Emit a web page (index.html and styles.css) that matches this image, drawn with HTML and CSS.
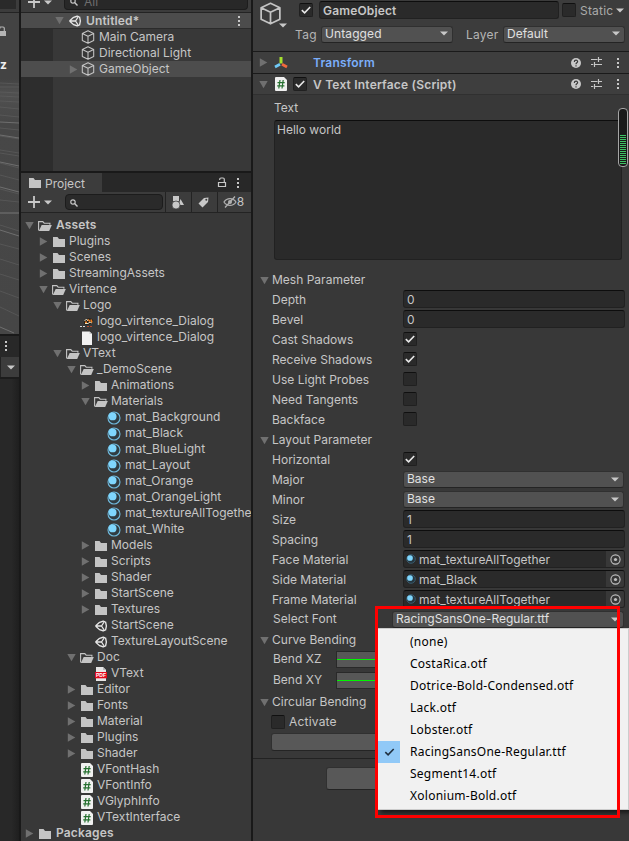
FILE: index.html
```html
<!DOCTYPE html>
<html lang="en">
<head>
<meta charset="utf-8">
<title>Editor</title>
<link rel="stylesheet" href="styles.css">
</head>
<body>
<svg class="defs" aria-hidden="true">
  <symbol id="folder" viewBox="0 0 14 14"><path d="M1 2h4.500l1.500 2H13v8H1z" fill="#c4c4c4"/></symbol>
  <symbol id="open" viewBox="0 0 14 14"><path d="M.6 11.500V2.600h4.200l1.400 1.600h5.700v1.600" fill="none" stroke="#c4c4c4" stroke-width="1.100"/><path d="M3.700 6H13.800l-2.600 6H.8z" fill="#c4c4c4"/></symbol>
  <symbol id="cube" viewBox="0 0 14 14"><path d="M7 .8l5.700 2.700v7L7 13.300 1.300 10.500v-7zM1.300 3.500L7 6.300l5.700-2.800M7 6.300v7" fill="none" stroke="#c4c4c4" stroke-width="1.050" stroke-linejoin="round"/></symbol>
  <symbol id="scene" viewBox="0 0 14 14"><path d="M5.600 3.300L9.800 2M1.500 7l4.100-3.700M1.500 7l4.100 3.700L9.800 12M11.500 2.600l.9 4.400-.9 4.400M7.500 7H2M7.500 7l3.300-5M7.500 7l3.300 5" fill="none" stroke="#e6e6e6" stroke-width="1.350"/></symbol>
  <symbol id="mat" viewBox="0 0 14 14"><circle cx="7" cy="7" r="6" fill="#303c42" stroke="#6fb9dc" stroke-width="1.100"/><circle cx="5.600" cy="5.400" r="3.900" fill="#7fd6fd"/></symbol>
  <symbol id="matsmall" viewBox="0 0 14 14"><circle cx="7" cy="7" r="6" fill="#25343c" stroke="#3d6478" stroke-width="1.200"/><circle cx="5.600" cy="5.600" r="4" fill="#7fd6fd"/></symbol>
  <symbol id="cs" viewBox="0 0 14 14"><path d="M2 0h8l3 3v10a1 1 0 0 1-1 1H2a1 1 0 0 1-1-1V1a1 1 0 0 1 1-1z" fill="#f0f0f0"/><path d="M6 3L4.800 11.500M9.200 3L8 11.500M3.500 5.700h7.200M3.200 8.800h7.200" stroke="#267030" stroke-width="1.200"/></symbol>
  <symbol id="file" viewBox="0 0 14 14"><path d="M2 .5h7.500l2.500 2.500v11H2z" fill="#f2f2f2"/><path d="M9.500.5V3H12z" fill="#ccc"/></symbol>
  <symbol id="bug" viewBox="0 0 14 14"><path d="M4 7c1-4 7-5 9.500-1.500L12 8.500 7 10 4 9z" fill="#25211a"/><path d="M4.500 6l2-2 1.500 2M5 8.500h3l2-1.500 2 1" stroke="#e9e3c8" fill="none"/><path d="M8 4.500l2 2M11 4.500l1 3M5 7.200h2" stroke="#ec7c20" stroke-width="1.500"/><path d="M0 11.500h6" stroke="#ddd" stroke-dasharray="2 1"/><path d="M7 11.500h6" stroke="#b5482c" stroke-dasharray="2 1"/></symbol>
  <symbol id="pdf" viewBox="0 0 14 14"><path d="M2 0h7l3 3v11H2z" fill="#e6e6e6"/><path d="M9 0v3h3z" fill="#bbb"/><rect x="1" y="5" width="12" height="6.300" fill="#e1061b"/><text x="7" y="10" text-anchor="middle" class="pdf-text">PDF</text></symbol>
  <symbol id="down" viewBox="0 0 9 8"><path d="M.3.5h8.400L4.500 7.700z" fill="#707070"/></symbol>
  <symbol id="right" viewBox="0 0 8 9"><path d="M.3.200L7.800 4.500.3 8.800z" fill="#707070"/></symbol>
  <symbol id="caret" viewBox="0 0 8 5"><path d="M0 .5h8L4 4.500z" fill="#c8c8c8"/></symbol>
  <symbol id="dots" viewBox="0 0 4 12"><path d="M1 1h2v2H1zM1 5h2v2H1zM1 9h2v2H1z" fill="#c8c8c8"/></symbol>
  <symbol id="plus" viewBox="0 0 12 12"><path d="M6 0v12M0 6h12" stroke="#c8c8c8" stroke-width="1.800"/></symbol>
  <symbol id="search" viewBox="0 0 8 8"><circle cx="3" cy="3" r="2.200" fill="none" stroke="#c8c8c8" stroke-width="1.200"/><path d="M4.600 4.600L7.500 7.500" stroke="#c8c8c8" stroke-width="1.400"/></symbol>
  <symbol id="lock" viewBox="0 0 10 11"><path d="M1.500 5.500h7v4h-7z" fill="none" stroke="#c8c8c8" stroke-width="1.200"/><path d="M2.700 3V2.300Q2.700 1 4 1h2Q7.300 1 7.300 2.300V5.500" fill="none" stroke="#c8c8c8" stroke-width="1.200"/></symbol>
  <symbol id="lockfull" viewBox="0 0 10 11"><path d="M1 5h8v5H1z" fill="#b4b4b4"/><path d="M2.700 3V2.300Q2.700 1 4 1h2Q7.300 1 7.300 2.300V5.500" fill="none" stroke="#b4b4b4" stroke-width="1.200"/></symbol>
  <symbol id="help" viewBox="0 0 10 10"><circle cx="5" cy="5" r="5" fill="#c8c8c8"/><path d="M3.300 3.900C3.400 1.500 6.800 1.700 6.600 3.800 6.500 4.900 5 4.800 5 6.200M5 7.200v1.200" fill="none" stroke="#383838" stroke-width="1.200"/></symbol>
  <symbol id="preset" viewBox="0 0 11 11"><path d="M0 3.500h6.500M8 3.500h3M7.500 1v5M0 8.500h2.300M4 8.500h7M3.500 6v5" fill="none" stroke="#c8c8c8" stroke-width="1.150"/></symbol>
  <symbol id="check" viewBox="0 0 10 8"><path d="M.8 4.200l2.800 2.600L9.200 1" fill="none" stroke="currentColor" stroke-width="1.600"/></symbol>
  <symbol id="target" viewBox="0 0 11 11"><circle cx="5.500" cy="5.500" r="4.600" fill="none" stroke="#c0c0c0" stroke-width="1.100"/><circle cx="5.500" cy="5.500" r="1.600" fill="#c0c0c0"/></symbol>
</svg>

<main class="app">
  <aside class="scene-strip">
    <div class="strip-field"></div>
    <div class="strip-view">
      <svg class="strip-lock"><use href="#lockfull"/></svg>
      <b class="axis">z</b>
      <svg class="grid-lines" viewBox="0 0 19 253" preserveAspectRatio="none">
        <g fill="none" stroke="#626262" stroke-width=".6"><path d="M0 2l19 1M0 6h19M0 11l19 1M0 15l19 1M0 20l19 1M0 26l19 2M0 34l19 2M0 47l19 2M0 55l19 3M0 69l19 3M0 72l19 3M0 82l19 5M0 94l19 5M0 108l19 5M0 119l19 2M0 132l19 0M0 144l19 6M0 163l19 5M0 178l19 6M0 193l19 6M0 210l19 7M0 226l19 9"/></g>
        <g fill="none" stroke="#808080" stroke-width=".7"><path d="M0 41l19 1M0 54l19 3M0 81l19 4M0 106l19 5M0 132h19M0 149l19 6M0 246l14 6"/></g>
      </svg>
    </div>
    <div class="strip-tab"><svg class="dots"><use href="#dots"/></svg></div>
    <div class="strip-tool"><svg class="caret"><use href="#caret"/></svg></div>
    <div class="strip-dark"></div>
  </aside>

  <section class="middle">
    <div class="hier-bar">
      <svg class="plus"><use href="#plus"/></svg><svg class="caret"><use href="#caret"/></svg>
      <div class="all"><svg class="mag"><use href="#search"/></svg><span>All</span></div>
    </div>
    <div class="hierarchy">
      <div class="hrow scene-row"><svg class="ar"><use href="#down"/></svg><svg class="ic"><use href="#scene"/></svg><b>Untitled*</b><svg class="dots"><use href="#dots"/></svg></div>
      <div class="hrow item"><svg class="ic"><use href="#cube"/></svg><span>Main Camera</span></div>
      <div class="hrow item"><svg class="ic"><use href="#cube"/></svg><span>Directional Light</span></div>
      <div class="hrow item parent selected"><svg class="ar"><use href="#right"/></svg><svg class="ic"><use href="#cube"/></svg><span>GameObject</span></div>
    </div>
    <div class="tabs"><div class="tab"><svg class="ic"><use href="#folder"/></svg><span>Project</span></div><svg class="tab-lock"><use href="#lock"/></svg><svg class="dots"><use href="#dots"/></svg></div>
    <div class="proj-bar">
      <svg class="plus"><use href="#plus"/></svg><svg class="caret"><use href="#caret"/></svg>
      <div class="search"><svg class="mag"><use href="#search"/></svg></div>
      <div class="tool"><svg width="12" height="13" viewBox="0 0 12 13"><path d="M1 0h6v5H1zM8.500 3l3.500 6H6.500z" fill="#c8c8c8"/><circle cx="4" cy="9" r="4" fill="#c8c8c8" stroke="#3c3c3c" stroke-width=".7"/></svg></div>
      <div class="tool"><svg width="11" height="11" viewBox="0 0 11 11"><path d="M6 1l4.500-.5L10 5 4.500 10.500.5 6.500z" fill="#c8c8c8"/><circle cx="8.300" cy="2.700" r="1" fill="#3c3c3c"/></svg></div>
      <div class="tool eye"><svg width="14" height="12" viewBox="0 0 14 12"><path d="M1 6c3-4.600 9-4.600 12 0-3 4.600-9 4.600-12 0zM2 11.500L12 .5" fill="none" stroke="#b0b0b0" stroke-width="1.300"/><circle cx="7" cy="6" r="2" fill="#b0b0b0"/></svg><span>8</span></div>
    </div>
    <div class="tree">
      <div class="row l0"><svg class="ar"><use href="#down"/></svg><svg class="ic"><use href="#open"/></svg><b>Assets</b></div>
      <div class="row l1"><svg class="ar"><use href="#right"/></svg><svg class="ic"><use href="#folder"/></svg><span>Plugins</span></div>
      <div class="row l1"><svg class="ar"><use href="#right"/></svg><svg class="ic"><use href="#folder"/></svg><span>Scenes</span></div>
      <div class="row l1"><svg class="ar"><use href="#right"/></svg><svg class="ic"><use href="#folder"/></svg><span>StreamingAssets</span></div>
      <div class="row l1"><svg class="ar"><use href="#down"/></svg><svg class="ic"><use href="#open"/></svg><span>Virtence</span></div>
      <div class="row l2"><svg class="ar"><use href="#down"/></svg><svg class="ic"><use href="#open"/></svg><span>Logo</span></div>
      <div class="row l3"><i class="ar"></i><svg class="ic"><use href="#bug"/></svg><span>logo_virtence_Dialog</span></div>
      <div class="row l3"><i class="ar"></i><svg class="ic"><use href="#file"/></svg><span>logo_virtence_Dialog</span></div>
      <div class="row l2"><svg class="ar"><use href="#down"/></svg><svg class="ic"><use href="#open"/></svg><span>VText</span></div>
      <div class="row l3"><svg class="ar"><use href="#down"/></svg><svg class="ic"><use href="#open"/></svg><span>_DemoScene</span></div>
      <div class="row l4"><svg class="ar"><use href="#right"/></svg><svg class="ic"><use href="#folder"/></svg><span>Animations</span></div>
      <div class="row l4"><svg class="ar"><use href="#down"/></svg><svg class="ic"><use href="#open"/></svg><span>Materials</span></div>
      <div class="row l5"><i class="ar"></i><svg class="ic"><use href="#mat"/></svg><span>mat_Background</span></div>
      <div class="row l5"><i class="ar"></i><svg class="ic"><use href="#mat"/></svg><span>mat_Black</span></div>
      <div class="row l5"><i class="ar"></i><svg class="ic"><use href="#mat"/></svg><span>mat_BlueLight</span></div>
      <div class="row l5"><i class="ar"></i><svg class="ic"><use href="#mat"/></svg><span>mat_Layout</span></div>
      <div class="row l5"><i class="ar"></i><svg class="ic"><use href="#mat"/></svg><span>mat_Orange</span></div>
      <div class="row l5"><i class="ar"></i><svg class="ic"><use href="#mat"/></svg><span>mat_OrangeLight</span></div>
      <div class="row l5"><i class="ar"></i><svg class="ic"><use href="#mat"/></svg><span>mat_textureAllTogethe</span></div>
      <div class="row l5"><i class="ar"></i><svg class="ic"><use href="#mat"/></svg><span>mat_White</span></div>
      <div class="row l4"><svg class="ar"><use href="#right"/></svg><svg class="ic"><use href="#folder"/></svg><span>Models</span></div>
      <div class="row l4"><svg class="ar"><use href="#right"/></svg><svg class="ic"><use href="#folder"/></svg><span>Scripts</span></div>
      <div class="row l4"><svg class="ar"><use href="#right"/></svg><svg class="ic"><use href="#folder"/></svg><span>Shader</span></div>
      <div class="row l4"><svg class="ar"><use href="#right"/></svg><svg class="ic"><use href="#folder"/></svg><span>StartScene</span></div>
      <div class="row l4"><svg class="ar"><use href="#right"/></svg><svg class="ic"><use href="#folder"/></svg><span>Textures</span></div>
      <div class="row l4"><i class="ar"></i><svg class="ic"><use href="#scene"/></svg><span>StartScene</span></div>
      <div class="row l4"><i class="ar"></i><svg class="ic"><use href="#scene"/></svg><span>TextureLayoutScene</span></div>
      <div class="row l3"><svg class="ar"><use href="#down"/></svg><svg class="ic"><use href="#open"/></svg><span>Doc</span></div>
      <div class="row l4"><i class="ar"></i><svg class="ic"><use href="#pdf"/></svg><span>VText</span></div>
      <div class="row l3"><svg class="ar"><use href="#right"/></svg><svg class="ic"><use href="#folder"/></svg><span>Editor</span></div>
      <div class="row l3"><svg class="ar"><use href="#right"/></svg><svg class="ic"><use href="#folder"/></svg><span>Fonts</span></div>
      <div class="row l3"><svg class="ar"><use href="#right"/></svg><svg class="ic"><use href="#folder"/></svg><span>Material</span></div>
      <div class="row l3"><svg class="ar"><use href="#right"/></svg><svg class="ic"><use href="#folder"/></svg><span>Plugins</span></div>
      <div class="row l3"><svg class="ar"><use href="#right"/></svg><svg class="ic"><use href="#folder"/></svg><span>Shader</span></div>
      <div class="row l3"><i class="ar"></i><svg class="ic"><use href="#cs"/></svg><span>VFontHash</span></div>
      <div class="row l3"><i class="ar"></i><svg class="ic"><use href="#cs"/></svg><span>VFontInfo</span></div>
      <div class="row l3"><i class="ar"></i><svg class="ic"><use href="#cs"/></svg><span>VGlyphInfo</span></div>
      <div class="row l3"><i class="ar"></i><svg class="ic"><use href="#cs"/></svg><span>VTextInterface</span></div>
      <div class="row l0"><svg class="ar"><use href="#right"/></svg><svg class="ic"><use href="#folder"/></svg><b>Packages</b></div>
    </div>
  </section>

  <section class="inspector">
    <header class="object-head">
      <div class="big-icon"><svg class="big-cube"><use href="#cube"/></svg><svg class="caret"><use href="#caret"/></svg></div>
      <div class="head-lines">
        <div class="name-line"><span class="box"><svg><use href="#check"/></svg></span><b class="field name">GameObject</b><span class="box"></span><span class="static">Static</span><svg class="caret"><use href="#caret"/></svg></div>
        <div class="tag-line"><span class="tag">Tag</span><span class="drop untagged">Untagged<svg class="caret"><use href="#caret"/></svg></span><span class="layer">Layer</span><span class="drop default">Default<svg class="caret"><use href="#caret"/></svg></span></div>
      </div>
    </header>
    <div class="component">
      <svg class="ar"><use href="#right"/></svg>
      <svg class="comp-icon" viewBox="0 0 14 14"><path d="M7 1v6.500" stroke="#a6e22e" stroke-width="3"/><path d="M6 8.200L1 11" stroke="#6fc9f5" stroke-width="2.700"/><path d="M8 8.200l5 2.800" stroke="#f2693d" stroke-width="2.700"/></svg>
      <i class="gap"></i><b class="transform">Transform</b>
      <svg class="help"><use href="#help"/></svg><svg class="preset"><use href="#preset"/></svg><svg class="dots"><use href="#dots"/></svg>
    </div>
    <div class="component second">
      <svg class="ar"><use href="#down"/></svg>
      <svg class="comp-icon"><use href="#cs"/></svg>
      <span class="box"><svg><use href="#check"/></svg></span><b>V Text Interface (Script)</b>
      <svg class="help"><use href="#help"/></svg><svg class="preset"><use href="#preset"/></svg><svg class="dots"><use href="#dots"/></svg>
    </div>
    <div class="body">
      <div class="text-label">Text</div>
      <div class="textarea">Hello world</div>
      <div class="prop fold"><svg class="ar"><use href="#down"/></svg><span>Mesh Parameter</span></div>
      <div class="prop"><label>Depth</label><span class="field">0</span></div>
      <div class="prop"><label>Bevel</label><span class="field">0</span></div>
      <div class="prop"><label>Cast Shadows</label><span class="box"><svg><use href="#check"/></svg></span></div>
      <div class="prop"><label>Receive Shadows</label><span class="box"><svg><use href="#check"/></svg></span></div>
      <div class="prop"><label>Use Light Probes</label><span class="box"></span></div>
      <div class="prop"><label>Need Tangents</label><span class="box"></span></div>
      <div class="prop"><label>Backface</label><span class="box"></span></div>
      <div class="prop fold"><svg class="ar"><use href="#down"/></svg><span>Layout Parameter</span></div>
      <div class="prop"><label>Horizontal</label><span class="box"><svg><use href="#check"/></svg></span></div>
      <div class="prop"><label>Major</label><span class="drop">Base<svg class="caret"><use href="#caret"/></svg></span></div>
      <div class="prop"><label>Minor</label><span class="drop">Base<svg class="caret"><use href="#caret"/></svg></span></div>
      <div class="prop"><label>Size</label><span class="field">1</span></div>
      <div class="prop"><label>Spacing</label><span class="field">1</span></div>
      <div class="prop"><label>Face Material</label><span class="field object"><svg class="mini"><use href="#matsmall"/></svg>mat_textureAllTogether<i class="pick"><svg><use href="#target"/></svg></i></span></div>
      <div class="prop"><label>Side Material</label><span class="field object"><svg class="mini"><use href="#matsmall"/></svg>mat_Black<i class="pick"><svg><use href="#target"/></svg></i></span></div>
      <div class="prop"><label>Frame Material</label><span class="field object"><svg class="mini"><use href="#matsmall"/></svg>mat_textureAllTogether<i class="pick"><svg><use href="#target"/></svg></i></span></div>
      <div class="prop select-font"><label>Select Font</label><span class="drop">RacingSansOne-Regular.ttf<svg class="caret"><use href="#caret"/></svg></span></div>
      <div class="prop fold"><svg class="ar"><use href="#down"/></svg><span>Curve Bending</span></div>
      <div class="prop bend"><label>Bend XZ</label><span class="curve"></span></div>
      <div class="prop bend"><label>Bend XY</label><span class="curve"></span></div>
      <div class="prop fold"><svg class="ar"><use href="#down"/></svg><span>Circular Bending</span></div>
      <div class="activate"><span class="box"></span><span>Activate</span></div>
      <div class="button wide"></div>
    </div>
    <div class="footer"><div class="button add"></div></div>
  </section>
</main>

<div class="meter"><i></i></div>
<ul class="menu">
  <li>(none)</li>
  <li>CostaRica.otf</li>
  <li>Dotrice-Bold-Condensed.otf</li>
  <li>Lack.otf</li>
  <li>Lobster.otf</li>
  <li class="chosen"><i><svg><use href="#check"/></svg></i>RacingSansOne-Regular.ttf</li>
  <li>Segment14.otf</li>
  <li>Xolonium-Bold.otf</li>
</ul>
<div class="highlight"></div>
</body>
</html>
```
FILE: styles.css
```css
* { box-sizing: border-box; }
body { margin: 0; width: 629px; height: 841px; overflow: hidden; position: relative; background: #191919; color: #c6c6c6; font: 12px/16px Inter, "Liberation Sans", sans-serif; letter-spacing: .01px; }
svg { display: block; flex: none; }
i { font-style: normal; }
b { font-weight: 600; letter-spacing: .15px; }
.defs { position: absolute; width: 0; height: 0; }
.pdf-text { font: 700 5px "Liberation Sans", sans-serif; fill: #fff; letter-spacing: 0; }
.app { display: grid; grid-template-columns: 19px 230px 376px; column-gap: 2px; height: 841px; }
.caret { width: 8px; height: 5px; }
.dots { width: 4px; height: 12px; }
.plus { width: 12px; height: 12px; }
.mag { width: 8px; height: 8px; }
.ic { width: 14px; height: 14px; }
.ar { width: 9px; height: 9px; flex: none; }

.scene-strip { display: flex; flex-direction: column; background: #3c3c3c; overflow: hidden; }
.strip-field { height: 13px; border-bottom: 1px solid #232323; background: linear-gradient(#2a2a2a, #2a2a2a) 0 0 / 16px 9px no-repeat #3c3c3c; }
.strip-view { height: 321px; padding-top: 1px; background: linear-gradient(#434343 0 66px, #505050 80px, #474747 110px, #464646); }
.strip-lock { width: 10px; height: 11px; margin: 12px 0 0 -3px; }
.axis { display: block; margin: 20px 0 0; font-size: 12px; line-height: 16px; color: #eee; font-weight: 700; }
.grid-lines { width: 19px; height: 253px; margin-top: 8px; }
.strip-tab { height: 21px; margin-top: 2px; background: #282828; padding: 4px 0 0 4px; box-shadow: 0 -2px #191919; }
.strip-tool { height: 20px; background: #3c3c3c; padding: 8px 0 0 6px; border-left: 1px solid #222; }
.strip-dark { flex: 1; border-top: 2px solid #1c1c1c; background: linear-gradient(90deg, #282828 60%, #1f1f1f); }

.middle { display: flex; flex-direction: column; min-width: 0; background: #383838; overflow: hidden; }
.hier-bar { display: flex; height: 13px; background: #3c3c3c; border-bottom: 1px solid #232323; padding-left: 7px; overflow: hidden; }
.hier-bar .plus { margin-top: -4px; }
.hier-bar .caret { margin: 0 0 0 4px; }
.all { display: flex; width: 184px; height: 10px; margin-left: 12px; padding-left: 5px; background: #282828; border: 1px solid #1d1d1d; border-top: 0; border-radius: 0 0 4px 4px; color: #6e6e6e; }
.all .mag { margin-top: -2px; }
.all span { margin: -6px 0 0 6px; height: 14px; }
.hierarchy { height: 158px; background: linear-gradient(90deg, #2d2d2d 32px, #383838 32px); }
.hrow { display: flex; align-items: center; height: 16px; }
.hrow span { margin-left: 4px; }
.scene-row { background: #4c4c4c; border-bottom: 1px solid #2b2b2b; padding-left: 34px; }
.scene-row .ic { margin-left: 4px; }
.scene-row b { margin-left: 4px; flex: 1; }
.scene-row .dots { margin-right: 10px; }
.item { padding-left: 60px; }
.parent { padding-left: 48px; }
.parent .ic { margin-left: 3px; }
.selected { background: #4d4d4d; }
.tabs { display: flex; height: 21px; border-top: 2px solid #191919; background: #282828; align-items: center; }
.tab { display: flex; align-items: center; width: 81px; height: 19px; padding-left: 7px; background: #3c3c3c; }
.tab .ic { margin-top: 1px; }
.tab span { margin: 3px 0 0 3px; }
.tab-lock { width: 10px; height: 11px; margin-left: 115px; }
.tabs .dots { margin-left: 9px; }
.proj-bar { display: flex; align-items: center; height: 21px; background: #3c3c3c; border-bottom: 1px solid #232323; padding-left: 7px; }
.proj-bar .caret { margin-left: 4px; }
.search { width: 98px; height: 16px; margin: 0 2px 0 13px; background: #2a2a2a; border: 1px solid #1c1c1c; border-radius: 4px; padding: 4px 4px; }
.tool { display: flex; align-items: center; justify-content: center; width: 26px; height: 20px; border-left: 1px solid #232323; padding-right: 2px; }
.tool.eye { width: 34px; }
.tree { padding-top: 4px; }
.row { display: flex; align-items: center; height: 16px; white-space: nowrap; }
.row .ic { margin: 1px 3px 0 4px; }
.l0 { padding-left: 4px; }
.l0 b { padding-left: 1px; }
.l1 { padding-left: 18px; }
.l2 { padding-left: 32px; }
.l3 { padding-left: 46px; }
.l4 { padding-left: 60px; }
.l5 { padding-left: 73px; }
.l5 span { padding-left: 1px; }

.inspector { background: #383838; min-width: 0; overflow: hidden; }
.box { display: flex; align-items: center; justify-content: center; flex: none; width: 14px; height: 14px; background: #2a2a2a; border: 1px solid #202020; border-top-color: #101010; border-radius: 2px; color: #e8e8e8; }
.box svg { width: 10px; height: 8px; }
.field { display: flex; align-items: center; height: 18px; background: #2a2a2a; border: 1px solid #212121; border-top-color: #0d0d0d; border-radius: 3px; padding-left: 3px; }
.drop { display: flex; align-items: center; justify-content: space-between; height: 17px; background: #515151; border: 1px solid #303030; border-bottom-color: #242424; border-radius: 3px; padding: 0 4px 1px 3px; color: #e0e0e0; }
.object-head { display: flex; height: 52px; background: #3c3c3c; border-bottom: 1px solid #1a1a1a; }
.big-icon { width: 42px; flex: none; padding: 2px 0 0 6px; }
.big-cube { width: 23px; height: 23px; }
.big-icon .caret { margin: -2px 0 0 20px; }
.name-line { display: flex; align-items: center; height: 18px; margin: 1px 0 0 4px; }
.name { width: 240px; margin: 0 3px 0 6px; padding-top: 1px; }
.static { width: 33px; margin: 1px 3px 0 4px; color: #aaa; letter-spacing: .2px; }
.tag-line { display: flex; align-items: center; margin-top: 6px; }
.tag { width: 26px; letter-spacing: .3px; margin-top: 2px; color: #b4b4b4; }
.untagged { width: 132px; letter-spacing: .1px; }
.layer { width: 37px; margin: 2px 0 0 13px; letter-spacing: .2px; color: #b4b4b4; }
.default { width: 122px; }
.component { display: flex; align-items: center; height: 22px; background: #3e3e3e; border-bottom: 1px solid #1a1a1a; padding-left: 6px; }
.component.second { height: 21px; border-bottom-color: #303030; }
.comp-icon { width: 14px; height: 14px; margin: 0 5px 0 6px; }
.gap { width: 14px; }
.component b { flex: 1; margin-left: 6px; letter-spacing: .2px; }
.component.second b { padding-top: 1px; }
.component .transform { color: #7baefa; }
.help { width: 10px; height: 10px; }
.preset { width: 11px; height: 11px; margin: -2px 14px 0 10px; }
.component .dots { margin-right: 9px; }
.body { height: 664px; border-bottom: 1px solid #222; }
.text-label { height: 25px; padding: 5px 0 0 21px; }
.textarea { height: 140px; width: 348px; margin: 0 0 10px 21px; padding: 1px 2px; background: #2a2a2a; border: 1px solid #212121; border-top-color: #0d0d0d; border-radius: 3px; }
.prop { display: flex; height: 20px; padding-left: 19px; line-height: 20px; white-space: nowrap; }
.prop label { width: 131px; flex: none; }
.prop .field { width: 222px; line-height: 16px; padding-top: 1px; }
.prop .drop { width: 221px; margin-top: 1px; }
.prop .box { margin-top: 2px; }
.prop.fold { padding-left: 7px; }
.fold .ar { margin: 6px 0 0; }
.fold span { margin-left: 3px; }
.prop .object { overflow: hidden; }
.mini { width: 10px; height: 10px; margin: -1px 3px 0 -1px; }
.pick { display: flex; align-items: center; justify-content: center; margin: -1px 0 0 auto; width: 18px; height: 16px; background: #383838; }
.pick svg { width: 11px; height: 11px; }
.prop.select-font { padding-left: 20px; line-height: 18px; }
.select-font label { width: 119px; }
.select-font .drop { width: 232px; }
.prop.bend { height: 21px; padding-left: 20px; line-height: 18px; }
.bend label { width: 63px; }
.curve { width: 288px; height: 17px; margin-top: 1px; background: linear-gradient(#00f500, #00f500) 0 7px / 100% 1px no-repeat #575757; border: 1px solid #292929; }
.activate { display: flex; align-items: center; gap: 4px; height: 20px; padding-left: 18px; letter-spacing: .2px; }
.button { background: #585858; border: 1px solid #303030; border-bottom-color: #242424; border-radius: 3px; }
.wide { height: 18px; margin: 1px 4px 0 18px; }
.add { width: 230px; height: 23px; margin: 8px 0 0 73px; }

.meter { position: absolute; left: 618px; top: 108px; width: 10px; height: 59px; border: 1px solid #a5a5a5; border-radius: 4px; background: #1a1a1a; padding: 26px 1px 2px; }
.meter i { display: block; height: 100%; background: repeating-linear-gradient(#3ec263 0 1px, #1a1a1a 1px 2px); }
.menu { position: absolute; left: 378px; top: 628px; width: 251px; height: 182px; margin: 0; padding: 2px 0; list-style: none; background: #f1f1f1; border: 1px solid #ccc; border-left: 0; color: #000; box-shadow: 3px 3px 4px #0008; font: 12px/22px "Noto Sans", sans-serif; letter-spacing: .25px; }
.menu li { display: flex; height: 22px; padding-left: 32px; white-space: nowrap; }
.menu .chosen { padding-left: 0; }
.chosen i { display: flex; align-items: center; justify-content: center; width: 22px; margin-right: 10px; background: #91c9f7; color: #203040; }
.chosen svg { width: 11px; height: 8px; }
.highlight { position: absolute; left: 375px; top: 606px; width: 245px; height: 212px; border: 3px solid #f00; }
```
